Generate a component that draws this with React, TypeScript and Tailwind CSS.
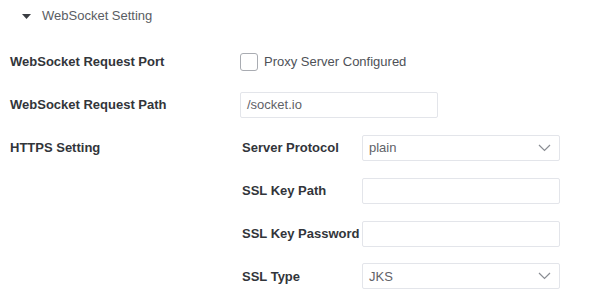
import { ReactNode } from 'react';

const font = { fontFamily: '"Liberation Sans", Arial, sans-serif' };

function Chevron() {
  return (
    <svg width="13" height="8" viewBox="0 0 13 8" className="shrink-0">
      <path d="M1 1l5.5 5.5L12 1" fill="none" stroke="#8a8d93" strokeWidth="1.2" />
    </svg>
  );
}

function TextInput({ value = '' }: { value?: string }) {
  return (
    <div className="flex h-[26px] w-[198px] items-center rounded-[2px] border border-[#e3e5ea] bg-white px-[6px] text-[13px] text-[#5f6268]">
      {value}
    </div>
  );
}

function SelectInput({ value }: { value: string }) {
  return (
    <div className="flex h-[26px] w-[198px] items-center justify-between rounded-[2px] border border-[#e3e5ea] bg-white pl-[6px] pr-[8px] text-[13px] text-[#5f6268]">
      <span>{value}</span>
      <Chevron />
    </div>
  );
}

function cn(...c: string[]) {
  return c.join(' ');
}

function Row({ label, children, width = 'w-[230px]' }: { label: string; children: ReactNode; width?: string }) {
  return (
    <div className="flex items-start">
      <div className={cn(width, 'flex h-[26px] shrink-0 items-center text-[13px] font-bold text-[#32353a]')}>{label}</div>
      {children}
    </div>
  );
}

export default function App() {
  return (
    <div className="h-[308px] w-[610px] bg-white" style={font}>
      <div className="flex h-[32px] items-center pl-[22px] text-[13px] text-[#5a5d63]">
        <svg width="9" height="5" viewBox="0 0 9 5" className="mr-[11px]">
          <path d="M0 0h9L4.5 5z" fill="#3a3d42" />
        </svg>
        WebSocket Setting
      </div>

      <div className="mt-[17px] flex flex-col gap-[17px] pl-[10px]">
        <Row label="WebSocket Request Port">
          <label className="flex h-[26px] items-center gap-[6px] text-[13px] text-[#4e5157]">
            <span className="h-[18px] w-[18px] rounded-[3px] border border-[#a9acb2] bg-white" />
            Proxy Server Configured
          </label>
        </Row>

        <Row label="WebSocket Request Path">
          <TextInput value="/socket.io" />
        </Row>

        <Row label="HTTPS Setting">
          <div className="flex flex-col gap-[16.8px] pl-[2px]">
            <Row label="Server Protocol" width="w-[120px]">
              <SelectInput value="plain" />
            </Row>
            <Row label="SSL Key Path" width="w-[120px]">
              <TextInput />
            </Row>
            <Row label="SSL Key Password" width="w-[120px]">
              <TextInput />
            </Row>
            <Row label="SSL Type" width="w-[120px]">
              <SelectInput value="JKS" />
            </Row>
          </div>
        </Row>
      </div>
    </div>
  );
}
